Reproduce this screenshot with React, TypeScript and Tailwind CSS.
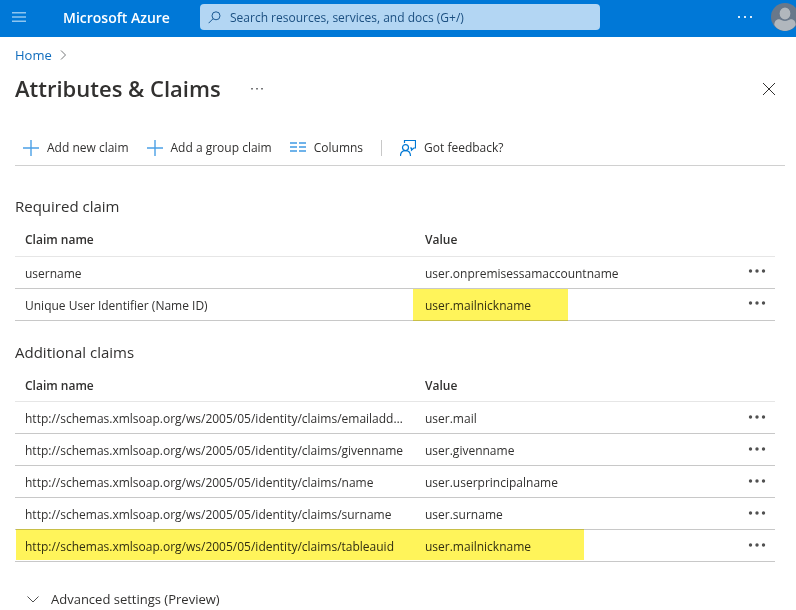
import { useState } from "react";

type Highlight = "value" | "row";

interface Claim {
  name: string;
  value: string;
  highlight?: Highlight;
}

const REQUIRED_CLAIMS: Claim[] = [
  { name: "username", value: "user.onpremisessamaccountname" },
  { name: "Unique User Identifier (Name ID)", value: "user.mailnickname", highlight: "value" },
];

const ADDITIONAL_CLAIMS: Claim[] = [
  { name: "http://schemas.xmlsoap.org/ws/2005/05/identity/claims/emailaddress", value: "user.mail" },
  { name: "http://schemas.xmlsoap.org/ws/2005/05/identity/claims/givenname", value: "user.givenname" },
  { name: "http://schemas.xmlsoap.org/ws/2005/05/identity/claims/name", value: "user.userprincipalname" },
  { name: "http://schemas.xmlsoap.org/ws/2005/05/identity/claims/surname", value: "user.surname" },
  { name: "http://schemas.xmlsoap.org/ws/2005/05/identity/claims/tableauid", value: "user.mailnickname", highlight: "row" },
];

function PlusIcon() {
  return (
    <svg width="16" height="16" viewBox="0 0 16 16" fill="none" stroke="#4ba0e6" strokeWidth="1.4" aria-hidden="true">
      <path d="M8 0v16M0 8h16" />
    </svg>
  );
}

function ColumnsIcon() {
  return (
    <svg width="16" height="16" viewBox="0 0 16 16" fill="#6fb3ea" aria-hidden="true">
      <path d="M0 2h7v2H0zM9 2h7v2H9zM0 6h7v2H0zM9 6h7v2H9zM0 10h7v2H0zM9 10h7v2H9z" />
    </svg>
  );
}

function FeedbackIcon() {
  return (
    <svg width="16" height="16" viewBox="0 0 16 16" fill="none" stroke="#0078d4" strokeWidth="1.2" aria-hidden="true">
      <path d="M4.500 3V.5h11v7.500h-1.700l-2.300 2.200V8h-1.500" />
      <circle cx="5.500" cy="7.600" r="3" />
      <path d="M.5 16c0-3.300 2-5.400 5-5.400s5 2.100 5 5.400" />
    </svg>
  );
}

function SearchIcon() {
  return (
    <svg width="13" height="13" viewBox="0 0 13 13" fill="none" stroke="#1b5a93" strokeWidth="1" aria-hidden="true">
      <circle cx="8" cy="4.8" r="4" />
      <path d="M5.1 7.7.6 12.2" />
    </svg>
  );
}

function ClaimsTable({ title, claims }: { title: string; claims: Claim[] }) {
  return (
    <section className="pr-[10px]">
      <h2 className="h-12 pt-[19px] text-[15px] leading-6">{title}</h2>
      <table aria-label={title} className="w-full table-fixed border-collapse text-left">
        <thead>
          <tr className="h-[33px] border-b border-[#e6e6e6]">
            <th className="w-[400px] pt-0.5 pl-[10px] font-semibold">Claim name</th>
            <th className="pt-0.5 pl-[10px] font-semibold">Value</th>
            <th aria-label="Actions" className="w-9" />
          </tr>
        </thead>
        <tbody>
          {claims.map((claim) => (
            <tr key={claim.name} className="h-8 border-b border-[#c8c8c8]">
              <td className="relative pt-[3px] pr-2 pl-[10px]">
                <div className="truncate" title={claim.name}>{claim.name}</div>
                {claim.highlight === "row" && (
                  <span className="pointer-events-none absolute -top-px bottom-px left-px z-10 w-[568px] bg-[#fff45a] mix-blend-multiply" />
                )}
              </td>
              <td className="relative pt-[3px] pl-[10px]">
                <div className="truncate">{claim.value}</div>
                {claim.highlight === "value" && (
                  <span className="pointer-events-none absolute top-0 -bottom-px -left-0.5 z-10 w-[155px] bg-[#fff45a] mix-blend-multiply" />
                )}
              </td>
              <td className="pb-0.5">
                <button type="button" aria-label={`Actions for ${claim.name}`} className="flex h-5 w-full items-center justify-center">
                  <svg width="18" height="4" viewBox="0 0 18 4" fill="#505050" aria-hidden="true">
                    <circle cx="2.5" cy="2" r="1.7" />
                    <circle cx="9" cy="2" r="1.7" />
                    <circle cx="15.5" cy="2" r="1.7" />
                  </svg>
                </button>
              </td>
            </tr>
          ))}
        </tbody>
      </table>
    </section>
  );
}

export default function App() {
  const [query, setQuery] = useState("");

  return (
    <div className="overflow-x-hidden bg-white font-['Open_Sans','Noto_Sans',sans-serif] text-xs leading-5 text-[#323130]">
      <header className="flex h-[37px] items-start overflow-hidden bg-[#0078d7] pl-3 text-white">
        <button type="button" aria-label="Show portal menu" className="mt-[11px] shrink-0">
          <svg width="14" height="12" viewBox="0 0 14 12" fill="#8ec5f0" aria-hidden="true">
            <path d="M0 1h14v1.6H0zM0 5.2h14v1.6H0zM0 9.4h14V11H0z" />
          </svg>
        </button>
        <a href="#" className="mt-2 ml-[37px] w-[137px] shrink-0 text-sm leading-5 font-semibold">Microsoft Azure</a>
        <label className="mt-1 flex h-[26px] min-w-0 max-w-[400px] flex-1 items-center gap-[9px] rounded-sm bg-[#b3d6f3] pl-2">
          <SearchIcon />
          <input
            type="text"
            aria-label="Search"
            value={query}
            onChange={(e) => setQuery(e.target.value)}
            placeholder="Search resources, services, and docs (G+/)"
            className="min-w-0 flex-1 pt-0.5 text-xs text-[#1b4f80] placeholder-[#1b4f80] outline-none"
          />
        </label>
        <div className="-mr-[3px] ml-auto flex shrink-0 items-start gap-[18px] pt-[3px]">
          <button type="button" aria-label="More" className="flex h-7 items-center">
            <svg width="15" height="2" viewBox="0 0 15 2" fill="#d9ebfa" aria-hidden="true">
              <path d="M0 0h2v2H0zM6 0h2v2H6zM12 0h2v2h-2z" />
            </svg>
          </button>
          <button type="button" aria-label="Account" className="size-7 overflow-hidden rounded-full">
            <svg width="28" height="28" viewBox="0 0 28 28" aria-hidden="true">
              <path fill="#69788a" d="M0 0h28v28H0z" />
              <path fill="#b1b7bd" d="M8 16.2c1.600 0 2.500 1.500 6 1.500s4.400-1.500 6-1.500c3 0 4.700 2.400 4.700 5.800-2.200 3.500-6 6-10.700 6s-8.500-2.500-10.700-6c0-3.400 1.700-5.800 4.700-5.800z" />
              <ellipse cx="14" cy="10.500" rx="6" ry="6.600" fill="#b1b7bd" stroke="#69788a" strokeWidth="1.200" />
            </svg>
          </button>
        </div>
      </header>

      <main className="pr-[11px] pl-[15px]">
        <nav aria-label="Breadcrumb" className="flex items-center gap-2 pt-2">
          <a href="#" className="text-[13px] text-[#0f6cbd]">Home</a>
          <svg width="7" height="10" viewBox="0 0 7 10" fill="none" stroke="#77787a" aria-hidden="true">
            <path d="m1 .5 4.500 4.500L1 9.500" />
          </svg>
        </nav>

        <div className="flex items-center pt-2 pb-[15px]">
          <h1 className="pb-0.5 text-[22px] leading-[30px] font-semibold">Attributes &amp; Claims</h1>
          <button type="button" aria-label="More actions" className="ml-[30px] flex h-5 items-center">
            <svg width="12" height="2" viewBox="0 0 12 2" fill="#77787a" aria-hidden="true">
              <path d="M0 0h2v1.500H0zM5 0h2v1.500H5zM10 0h2v1.500h-2z" />
            </svg>
          </button>
          <button type="button" aria-label="Close" className="mr-[10px] ml-auto">
            <svg width="12" height="12" viewBox="0 0 12 12" fill="none" stroke="#323130" aria-hidden="true">
              <path d="m0 0 12 12M12 0 0 12" />
            </svg>
          </button>
        </div>

        <div role="toolbar" aria-label="Claim commands" className="mb-[9px] flex h-[46px] items-center gap-[18px] border-b border-[#d0d0d0] pt-[11px] pl-2">
          <button type="button" className="flex items-center gap-2"><PlusIcon />Add new claim</button>
          <button type="button" className="flex items-center gap-2"><PlusIcon />Add a group claim</button>
          <button type="button" className="flex items-center gap-2"><ColumnsIcon />Columns</button>
          <span className="h-4 w-px bg-[#c8c8c8]" />
          <button type="button" className="flex items-center gap-2"><FeedbackIcon />Got feedback?</button>
        </div>

        <ClaimsTable title="Required claim" claims={REQUIRED_CLAIMS} />
        <ClaimsTable title="Additional claims" claims={ADDITIONAL_CLAIMS} />

        <button type="button" className="mt-[27px] ml-3 flex items-center gap-3 text-[13px]">
          <svg width="12" height="7" viewBox="0 0 12 7" fill="none" stroke="#505050" aria-hidden="true">
            <path d="m.5.500 5.500 5.500L11.500.500" />
          </svg>
          Advanced settings (Preview)
        </button>
      </main>
    </div>
  );
}
